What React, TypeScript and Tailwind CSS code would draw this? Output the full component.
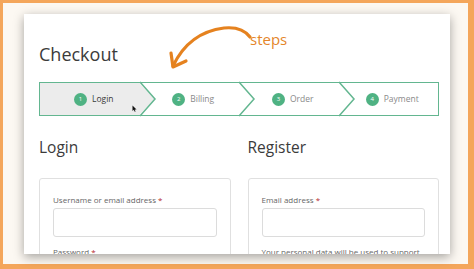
import React from "react";

const steps = [
  { n: 1, label: "Login", active: true },
  { n: 2, label: "Billing", active: false },
  { n: 3, label: "Order", active: false },
  { n: 4, label: "Payment", active: false },
];

// chevron divider drawn at the right edge of a step
function Chevron({ fill }: { fill: string }) {
  return (
    <svg
      className="absolute top-0 right-[-15px] z-10 h-full w-[15px] overflow-visible"
      viewBox="0 0 15 31"
      preserveAspectRatio="none"
    >
      <polygon points="-1,0 15,15.5 -1,31" fill={fill} />
      <polyline points="0,-1 15,15.5 0,32" fill="none" stroke="#63b690" strokeWidth="1.5" />
    </svg>
  );
}

function Stepper() {
  return (
    <div className="mt-[14px] flex h-[34px] border-[1.5px] border-[#63b690]">
      {steps.map((s, i) => (
        <div
          key={s.n}
          className={`relative flex flex-1 items-center justify-center gap-[5px] pl-2 ${
            s.active ? "bg-[#ececec]" : "bg-white"
          }`}
        >
          <span className="flex h-[13px] w-[13px] items-center justify-center rounded-full bg-[#4fb283] text-[6px] leading-none text-white">
            {s.n}
          </span>
          <span className={`text-[8.5px] ${s.active ? "text-[#3a3a3a]" : "text-[#8a8a8a]"}`}>
            {s.label}
          </span>
          {i < steps.length - 1 && <Chevron fill={s.active ? "#ececec" : "#ffffff"} />}
          {s.active && (
            <svg className="absolute left-[92px] top-[22px] h-[7px] w-[5px]" viewBox="0 0 5 7">
              <path d="M0.5 0.5 L0.5 6 L1.8 4.7 L2.8 6.8 L3.6 6.4 L2.7 4.4 L4.5 4.4 Z" fill="#111" />
            </svg>
          )}
        </div>
      ))}
    </div>
  );
}

function Field({ label }: { label: string }) {
  return (
    <div>
      <div className="mb-[2px] text-[8px] leading-[12px] text-[#666]">
        {label} <span className="text-[#b5262b]">*</span>
      </div>
      <div className="h-[29px] w-full rounded-[3px] border border-[#dcdcdc] bg-white" />
    </div>
  );
}

export default function App() {
  return (
    <div className="h-[269px] w-[474px] bg-[#f4a65b] pb-[5px] pl-[3px] pr-[6px] pt-[3px] font-['Open_Sans',sans-serif]">
      <div className="h-full bg-[#fcf8f2] pb-[10px] pl-[21px] pr-[18px] pt-[11px]">
        <div className="relative h-full overflow-hidden bg-white pl-[15px] pr-[11px] pt-[27px] shadow-[0_3px_10px_rgba(0,0,0,0.35)]">
          <h1 className="text-[18px] leading-[27px] text-[#3b3b3b]">Checkout</h1>

          {/* annotation */}
          <svg className="absolute left-[140px] top-[6px] h-[55px] w-[100px]" viewBox="0 0 100 55">
            <path
              d="M86 17 C80 9, 70 7, 60 8 C36 11, 19 25, 9 46"
              fill="none"
              stroke="#e5821f"
              strokeWidth="3.2"
              strokeLinecap="round"
            />
            <path
              d="M7 33 L9 47 L22 41"
              fill="none"
              stroke="#e5821f"
              strokeWidth="3.2"
              strokeLinecap="round"
              strokeLinejoin="round"
            />
          </svg>
          <span className="absolute left-[226px] top-[17.7px] text-[15px] leading-[15px] text-[#e4862a]">
            steps
          </span>

          <Stepper />

          <div className="mt-[20px] grid grid-cols-2 gap-[17px]">
            <div>
              <h2 className="text-[15.5px] leading-[22px] text-[#3b3b3b]">Login</h2>
              <div className="mt-[20px] h-[120px] rounded-[3px] border border-[#e0e0e0] px-[13px] pt-[15px]">
                <Field label="Username or email address" />
                <div className="mt-[9px] text-[8px] leading-[12px] text-[#666]">
                  Password <span className="text-[#b5262b]">*</span>
                </div>
              </div>
            </div>
            <div>
              <h2 className="text-[15.5px] leading-[22px] text-[#3b3b3b]">Register</h2>
              <div className="mt-[20px] h-[120px] rounded-[3px] border border-[#e0e0e0] px-[13px] pt-[15px]">
                <Field label="Email address" />
                <div className="mt-[9px] text-[8px] leading-[12px] text-[#666]">
                  Your personal data will be used to support
                </div>
              </div>
            </div>
          </div>
        </div>
      </div>
    </div>
  );
}
